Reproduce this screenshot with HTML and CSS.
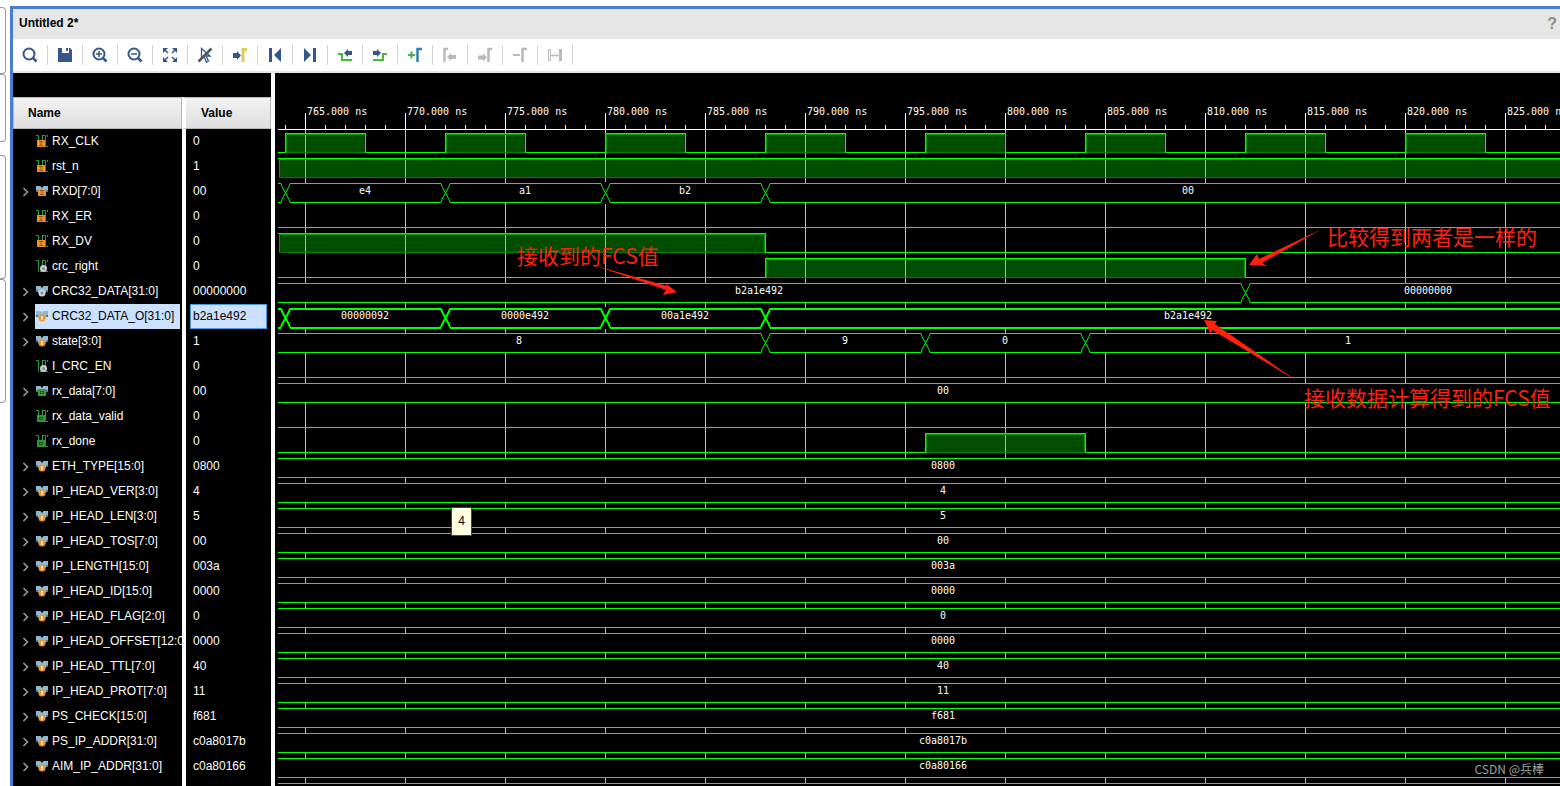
FILE: index.html
```html
<!DOCTYPE html>
<html lang="en">
<head>
<meta charset="utf-8">
<title>Untitled 2*</title>
<link rel="stylesheet" href="styles.css">
</head>
<body>
<svg class="defs" aria-hidden="true">
  <symbol id="wire" viewBox="0 0 12 12"><path d="M0 .5H2.500V11.500M6.500 0V11.500H4M6.500 .5H9.500V11.500H12M11.500 0V2" fill="none" stroke="#2f9a41"/></symbol>
  <symbol id="wire-in" viewBox="0 0 12 12"><use href="#wire"/><rect x="1" y="5" width="8" height="7" fill="#f0942a"/><path d="M3 6.500H7M5 6.500V10M3 10.500H7" stroke="#9c5510" fill="none"/></symbol>
  <symbol id="wire-net" viewBox="0 0 12 12"><use href="#wire"/><circle cx="7.500" cy="8.500" r="3.500" fill="#c9ccd0"/><circle cx="7.500" cy="8.500" r="1.500" fill="#888"/></symbol>
  <symbol id="wire-out" viewBox="0 0 12 12"><use href="#wire"/><rect x="1" y="5" width="8" height="7" fill="#36913c"/><rect x="3.500" y="7.500" width="3" height="2" fill="none" stroke="#1c5b22"/></symbol>
  <symbol id="busbase" viewBox="0 0 12 12"><path d="M0 1H4.500L6 3L7.500 1H12V7H10L8 10H4L2 7H0Z" fill="#90b9d1"/><path d="M0 5H2V7H0ZM10 5H12V7H10Z" fill="#557788"/></symbol>
  <symbol id="bus-in" viewBox="0 0 12 12"><use href="#busbase"/><rect x="2" y="4" width="8" height="7" fill="#f0942a"/><path d="M4 5.500H8M6 5.500V9.500M4 9.500H8" stroke="#9c5510" fill="none"/></symbol>
  <symbol id="bus-reg" viewBox="0 0 12 12"><use href="#busbase"/><circle cx="6" cy="8" r="3.500" fill="#f0942a"/><rect x="5" y="6" width="2" height="4" fill="#ffe2a8"/></symbol>
  <symbol id="bus-net" viewBox="0 0 12 12"><use href="#busbase"/><circle cx="6" cy="8" r="3.500" fill="#d0d3d7"/><circle cx="6" cy="8" r="1.500" fill="#858a90"/></symbol>
  <symbol id="bus-out" viewBox="0 0 12 12"><use href="#busbase"/><rect x="2" y="4" width="8" height="7" fill="#3c9c3c"/><rect x="4.500" y="6.500" width="3" height="2" fill="none" stroke="#1c5b22"/></symbol>
  <symbol id="chev" viewBox="0 0 6 10"><path d="M1 1L5 5L1 9" fill="none" stroke="#a0a0a0" stroke-width="1.500"/></symbol>
  <symbol id="lens" viewBox="0 0 18 18"><circle cx="8" cy="8" r="5.500" fill="none" stroke="#34568b" stroke-width="2"/><path d="M12 12L15.500 15.500" stroke="#34568b" stroke-width="2.500"/></symbol>
</svg>

<div class="app">
  <div class="side" aria-hidden="true">
    <div class="card short"></div><div class="card short gap"></div>
    <div class="card tall"></div><div class="card tall"></div>
  </div>
  <main class="window">
    <header class="titlebar"><h1>Untitled 2*</h1><button class="help" aria-label="Help">?</button></header>
    <div class="toolbar" role="toolbar" aria-label="Waveform tools">
      <button aria-label="Search"><svg viewBox="0 0 18 18"><use href="#lens"/></svg></button>
      <button aria-label="Save"><svg viewBox="0 0 18 18"><path d="M2 2H6V7H13V2H14L16 4V16H2Z M10 2H12V5H10Z" fill="#34568b"/></svg></button>
      <button aria-label="Zoom in"><svg viewBox="0 0 18 18"><use href="#lens"/><path d="M5 8H11M8 5V11" stroke="#34568b" stroke-width="1.500"/></svg></button>
      <button aria-label="Zoom out"><svg viewBox="0 0 18 18"><use href="#lens"/><path d="M5 8H11" stroke="#34568b" stroke-width="1.500"/></svg></button>
      <button aria-label="Zoom fit"><svg viewBox="0 0 18 18"><path d="M2 2H7L2 7ZM16 2H11L16 7ZM2 16H7L2 11ZM16 16H11L16 11Z" fill="#34568b"/><path d="M3 3L7 7M15 3L11 7M3 15L7 11M15 15L11 11" stroke="#34568b" stroke-width="1.500"/></svg></button>
      <button aria-label="Unsnap cursor"><svg viewBox="0 0 18 18"><path d="M5.500 2.500V13L8 10.500L10.500 16L12.500 15L10 10H14Z" fill="#fff" stroke="#34568b" stroke-width="1.300"/><path d="M2.500 15.500L15.500 2.500" stroke="#555" stroke-width="2.500"/></svg></button>
      <button aria-label="Go to cursor"><svg viewBox="0 0 18 18"><path d="M2 7H6V5L10 9.500L6 14V12H2Z" fill="#34568b"/><path d="M12 16V3.500H16" fill="none" stroke="#e0c75c" stroke-width="3"/></svg></button>
      <button aria-label="Go to start"><svg viewBox="0 0 18 18"><path d="M3 2H6V16H3ZM15 2V16L8 9Z" fill="#34568b"/></svg></button>
      <button aria-label="Go to end"><svg viewBox="0 0 18 18"><path d="M12 2H15V16H12ZM3 2V16L10 9Z" fill="#34568b"/></svg></button>
      <button aria-label="Previous transition"><svg viewBox="0 0 18 18"><path d="M2 8H6V14H16" fill="none" stroke="#46b83c" stroke-width="2"/><path d="M8 7L12 3V5H16V9H12V11Z" fill="#34568b"/></svg></button>
      <button aria-label="Next transition"><svg viewBox="0 0 18 18"><path d="M2 14H12V8H16" fill="none" stroke="#46b83c" stroke-width="2"/><path d="M10 7L6 3V5H2V9H6V11Z" fill="#34568b"/></svg></button>
      <button aria-label="Add marker"><svg viewBox="0 0 18 18"><path d="M2 9H9M5.500 5.500V12.500" stroke="#46b04c" stroke-width="2"/><path d="M11.500 16V3H16" fill="none" stroke="#2f7fb4" stroke-width="2.500"/></svg></button>
      <button aria-label="Previous marker" disabled><svg viewBox="0 0 18 18"><path d="M3.500 16V3H7" fill="none" stroke="#b9b9b9" stroke-width="2.500"/><path d="M6 11L10 7V9H15V13H10V15Z" fill="#b9b9b9"/></svg></button>
      <button aria-label="Next marker" disabled><svg viewBox="0 0 18 18"><path d="M12.500 16V3H16" fill="none" stroke="#b9b9b9" stroke-width="2.500"/><path d="M11 11.500L7 7.500V9.500H2V13.500H7V15.500Z" fill="#b9b9b9"/></svg></button>
      <button aria-label="Remove marker" disabled><svg viewBox="0 0 18 18"><path d="M2 9H9" stroke="#b9b9b9" stroke-width="2"/><path d="M11.500 16V3H16" fill="none" stroke="#b9b9b9" stroke-width="2.500"/></svg></button>
      <button aria-label="Measure" disabled><svg viewBox="0 0 18 18"><path d="M2.500 3.500H4.500V14.500H2.500Z" fill="none" stroke="#b9b9b9"/><path d="M13 3H16V15H13Z" fill="#b9b9b9"/><path d="M5 9.500H13M8 7.500L6 9.500L8 11.500M10 7.500L12 9.500L10 11.500" fill="none" stroke="#b9b9b9"/></svg></button>
    </div>
    <div class="content">
      <section class="signals">
        <table>
          <colgroup><col class="col-name"><col class="col-value"></colgroup>
          <thead><tr><th scope="col">Name</th><th scope="col">Value</th></tr></thead>
          <tbody>
            <tr><td><div class="sig"><i></i><svg><use href="#wire-in"/></svg><span>RX_CLK</span></div></td><td><span>0</span></td></tr>
            <tr><td><div class="sig"><i></i><svg><use href="#wire-in"/></svg><span>rst_n</span></div></td><td><span>1</span></td></tr>
            <tr><td><div class="sig"><button aria-label="Expand"><svg><use href="#chev"/></svg></button><svg><use href="#bus-in"/></svg><span>RXD[7:0]</span></div></td><td><span>00</span></td></tr>
            <tr><td><div class="sig"><i></i><svg><use href="#wire-in"/></svg><span>RX_ER</span></div></td><td><span>0</span></td></tr>
            <tr><td><div class="sig"><i></i><svg><use href="#wire-in"/></svg><span>RX_DV</span></div></td><td><span>0</span></td></tr>
            <tr><td><div class="sig"><i></i><svg><use href="#wire-net"/></svg><span>crc_right</span></div></td><td><span>0</span></td></tr>
            <tr><td><div class="sig"><button aria-label="Expand"><svg><use href="#chev"/></svg></button><svg><use href="#bus-net"/></svg><span>CRC32_DATA[31:0]</span></div></td><td><span>00000000</span></td></tr>
            <tr class="selected"><td><div class="sig"><button aria-label="Expand"><svg><use href="#chev"/></svg></button><svg><use href="#bus-reg"/></svg><span>CRC32_DATA_O[31:0]</span></div></td><td><span>b2a1e492</span></td></tr>
            <tr><td><div class="sig"><button aria-label="Expand"><svg><use href="#chev"/></svg></button><svg><use href="#bus-reg"/></svg><span>state[3:0]</span></div></td><td><span>1</span></td></tr>
            <tr><td><div class="sig"><i></i><svg><use href="#wire-net"/></svg><span>I_CRC_EN</span></div></td><td><span>0</span></td></tr>
            <tr><td><div class="sig"><button aria-label="Expand"><svg><use href="#chev"/></svg></button><svg><use href="#bus-out"/></svg><span>rx_data[7:0]</span></div></td><td><span>00</span></td></tr>
            <tr><td><div class="sig"><i></i><svg><use href="#wire-out"/></svg><span>rx_data_valid</span></div></td><td><span>0</span></td></tr>
            <tr><td><div class="sig"><i></i><svg><use href="#wire-out"/></svg><span>rx_done</span></div></td><td><span>0</span></td></tr>
            <tr><td><div class="sig"><button aria-label="Expand"><svg><use href="#chev"/></svg></button><svg><use href="#bus-reg"/></svg><span>ETH_TYPE[15:0]</span></div></td><td><span>0800</span></td></tr>
            <tr><td><div class="sig"><button aria-label="Expand"><svg><use href="#chev"/></svg></button><svg><use href="#bus-reg"/></svg><span>IP_HEAD_VER[3:0]</span></div></td><td><span>4</span></td></tr>
            <tr><td><div class="sig"><button aria-label="Expand"><svg><use href="#chev"/></svg></button><svg><use href="#bus-reg"/></svg><span>IP_HEAD_LEN[3:0]</span></div></td><td><span>5</span></td></tr>
            <tr><td><div class="sig"><button aria-label="Expand"><svg><use href="#chev"/></svg></button><svg><use href="#bus-reg"/></svg><span>IP_HEAD_TOS[7:0]</span></div></td><td><span>00</span></td></tr>
            <tr><td><div class="sig"><button aria-label="Expand"><svg><use href="#chev"/></svg></button><svg><use href="#bus-reg"/></svg><span>IP_LENGTH[15:0]</span></div></td><td><span>003a</span></td></tr>
            <tr><td><div class="sig"><button aria-label="Expand"><svg><use href="#chev"/></svg></button><svg><use href="#bus-reg"/></svg><span>IP_HEAD_ID[15:0]</span></div></td><td><span>0000</span></td></tr>
            <tr><td><div class="sig"><button aria-label="Expand"><svg><use href="#chev"/></svg></button><svg><use href="#bus-reg"/></svg><span>IP_HEAD_FLAG[2:0]</span></div></td><td><span>0</span></td></tr>
            <tr><td><div class="sig"><button aria-label="Expand"><svg><use href="#chev"/></svg></button><svg><use href="#bus-reg"/></svg><span>IP_HEAD_OFFSET[12:0]</span></div></td><td><span>0000</span></td></tr>
            <tr><td><div class="sig"><button aria-label="Expand"><svg><use href="#chev"/></svg></button><svg><use href="#bus-reg"/></svg><span>IP_HEAD_TTL[7:0]</span></div></td><td><span>40</span></td></tr>
            <tr><td><div class="sig"><button aria-label="Expand"><svg><use href="#chev"/></svg></button><svg><use href="#bus-reg"/></svg><span>IP_HEAD_PROT[7:0]</span></div></td><td><span>11</span></td></tr>
            <tr><td><div class="sig"><button aria-label="Expand"><svg><use href="#chev"/></svg></button><svg><use href="#bus-reg"/></svg><span>PS_CHECK[15:0]</span></div></td><td><span>f681</span></td></tr>
            <tr><td><div class="sig"><button aria-label="Expand"><svg><use href="#chev"/></svg></button><svg><use href="#bus-reg"/></svg><span>PS_IP_ADDR[31:0]</span></div></td><td><span>c0a8017b</span></td></tr>
            <tr><td><div class="sig"><button aria-label="Expand"><svg><use href="#chev"/></svg></button><svg><use href="#bus-reg"/></svg><span>AIM_IP_ADDR[31:0]</span></div></td><td><span>c0a80166</span></td></tr>
          </tbody>
        </table>
      </section>
      <section class="wave">
        <svg class="plot" role="img" aria-label="Signal waveforms">
          <defs>
            <pattern id="grid" x="30" y="0" width="100" height="1000" patternUnits="userSpaceOnUse"><rect width="1" height="1000" fill="#bdbdbd"/></pattern>
            <pattern id="major" x="30" y="0" width="100" height="1000" patternUnits="userSpaceOnUse"><rect width="1" height="1000" fill="#fff"/></pattern>
            <pattern id="minor" x="10" y="0" width="20" height="1000" patternUnits="userSpaceOnUse"><rect width="1" height="1000" fill="#fff"/></pattern>
            <pattern id="clock" x="10" y="60" width="160" height="20" patternUnits="userSpaceOnUse">
              <rect width="80" height="20" class="high"/><path d="M1.500 19V1.500H80" class="inner"/><path d="M1 19.500H80" class="base"/><path d="M.5 20V.5H80.500V19.500H160" class="line"/>
            </pattern>
            <g id="bus"><rect x="3" width="3000" height="20" fill="#000"/><path d="M3 .5H3000M3 19.500H3000" class="line"/></g>
            <path id="low" d="M3 19.500H3000" class="line"/>
            <g id="cross"><rect x="-4" y="-1" width="9" height="22" fill="#000"/><path d="M-4 .5L-3 3.500L.5 10L4 16.500L5 19.500M5 .5L4 3.500L.5 10L-3 16.500L-4 19.500" class="line smooth"/></g>
          </defs>
          <rect x="3" y="57" width="100%" height="100%" fill="url(#grid)"/>
          <rect x="3" y="40" width="100%" height="17" fill="url(#major)"/>
          <rect x="3" y="52" width="100%" height="5" fill="url(#minor)"/>
          <rect x="3" y="56" width="100%" height="1" fill="#fff"/>
          <g class="label">
            <text x="32" y="42">765.000 ns</text><text x="132" y="42">770.000 ns</text><text x="232" y="42">775.000 ns</text><text x="332" y="42">780.000 ns</text><text x="432" y="42">785.000 ns</text><text x="532" y="42">790.000 ns</text><text x="632" y="42">795.000 ns</text><text x="732" y="42">800.000 ns</text><text x="832" y="42">805.000 ns</text><text x="932" y="42">810.000 ns</text><text x="1032" y="42">815.000 ns</text><text x="1132" y="42">820.000 ns</text><text x="1232" y="42">825.000 ns</text>
          </g>
          <rect x="3" y="60" width="100%" height="20" fill="url(#clock)"/>
          <rect x="4" y="85" width="3000" height="20" class="high"/><path d="M4.500 105V86.500H3000" class="inner"/><path d="M4 104.500H3000" class="base"/><path d="M3 85.500H3000" class="line"/>
          <use href="#bus" y="110"/><use href="#cross" x="10" y="110"/><use href="#cross" x="170" y="110"/><use href="#cross" x="330" y="110"/><use href="#cross" x="490" y="110"/>
          <use href="#low" y="135"/>
          <rect x="4" y="160" width="486" height="20" class="high"/><path d="M4.500 180V161.500H489.500V180" class="inner"/><path d="M4 179.500H490" class="base"/><path d="M3 160.500H490.500V179.500H3000" class="line"/>
          <rect x="491" y="185" width="479" height="20" class="high"/><path d="M491.500 204V186.500H969.500V204" class="inner"/><path d="M3 204.500H490.500V185.500H970.500V204.500H3000" class="line"/><path d="M491 204.500H970" class="base"/>
          <use href="#bus" y="210"/><use href="#cross" x="970" y="210"/>
          <g class="active"><use href="#bus" y="235"/><use href="#cross" x="10" y="235"/><use href="#cross" x="170" y="235"/><use href="#cross" x="330" y="235"/><use href="#cross" x="490" y="235"/></g>
          <use href="#bus" y="260"/><use href="#cross" x="490" y="260"/><use href="#cross" x="650" y="260"/><use href="#cross" x="810" y="260"/>
          <use href="#low" y="285"/><use href="#bus" y="310"/><use href="#low" y="335"/>
          <rect x="651" y="360" width="159" height="20" class="high"/><path d="M651.500 379V361.500H809.500V379" class="inner"/><path d="M3 379.500H650.500V360.500H810.500V379.500H3000" class="line"/><path d="M651 379.500H810" class="base"/>
          <use href="#bus" y="385"/><use href="#bus" y="410"/><use href="#bus" y="435"/><use href="#bus" y="460"/><use href="#bus" y="485"/><use href="#bus" y="510"/><use href="#bus" y="535"/><use href="#bus" y="560"/><use href="#bus" y="585"/><use href="#bus" y="610"/><use href="#bus" y="635"/><use href="#bus" y="660"/><use href="#bus" y="685"/><use href="#bus" y="710"/>
          <g class="label mid">
            <text x="90" y="121">e4</text><text x="250" y="121">a1</text><text x="410" y="121">b2</text><text x="913" y="121">00</text>
            <text x="484" y="221">b2a1e492</text><text x="1153" y="221">00000000</text>
            <text x="90" y="246">00000092</text><text x="250" y="246">0000e492</text><text x="410" y="246">00a1e492</text><text x="913" y="246">b2a1e492</text>
            <text x="244" y="271">8</text><text x="570" y="271">9</text><text x="730" y="271">0</text><text x="1073" y="271">1</text>
            <text x="668" y="321">00</text><text x="668" y="396">0800</text><text x="668" y="421">4</text><text x="668" y="446">5</text><text x="668" y="471">00</text><text x="668" y="496">003a</text><text x="668" y="521">0000</text><text x="668" y="546">0</text><text x="668" y="571">0000</text><text x="668" y="596">40</text><text x="668" y="621">11</text><text x="668" y="646">f681</text><text x="668" y="671">c0a8017b</text><text x="668" y="696">c0a80166</text>
          </g>
          <g class="note">
            <path d="M318 192L392 213L390 210L402 219L388 222L391 217Z"/>
            <path d="M1047 156L987 190L992 193L974 192L982 181L984 186Z"/>
            <path d="M1022 308L937 257L936 262L929 247L942 248L940 251Z"/>
            <text x="242" y="191">接收到的FCS值</text>
            <text x="1052" y="172">比较得到两者是一样的</text>
            <text x="1029" y="333">接收数据计算得到的FCS值</text>
          </g>
        </svg>
        <div class="tip" role="tooltip">4</div>
        <div class="credit">CSDN @兵棒</div>
      </section>
    </div>
  </main>
</div>
</body>
</html>
```
FILE: styles.css
```css
* { box-sizing: border-box; }
body { margin: 0; background: #fff; color: #000; font: 12px/16px "Liberation Sans", "Noto Sans CJK SC", sans-serif; overflow: hidden; }
button { margin: 0; padding: 0; border: 0; background: none; font: inherit; }
.defs { position: absolute; width: 0; height: 0; }
.app { display: flex; height: 100vh; }
.side { flex: none; width: 10px; padding-top: 7px; }
.card { width: 6px; border: 1px solid #999; border-left: 0; border-radius: 0 4px 4px 0; }
.short { height: 67px; }
.gap { height: 68px; margin-bottom: 13px; }
.tall { height: 124px; }
.window { flex: 1; min-width: 0; display: flex; flex-direction: column; margin-top: 6px; border: solid #4a7dcf; border-width: 3px 0 0 3px; }
.titlebar { flex: none; display: flex; align-items: center; justify-content: space-between; height: 30px; padding: 0 3px 0 6px; background: #e6e6e6; }
.titlebar h1 { margin: 0; padding-bottom: 2px; font-size: 12px; }
.help { color: #8c8c8c; font-size: 16px; font-weight: bold; }
.toolbar { flex: none; display: flex; align-items: center; height: 34px; border-bottom: 2px solid #e6e6e6; }
.toolbar button { display: flex; align-items: center; justify-content: center; width: 35px; height: 20px; border-right: 1px solid #d4d4d4; }
.toolbar svg { width: 18px; height: 18px; }
.content { flex: 1; min-height: 0; display: flex; }
.signals { flex: none; width: 258px; padding-top: 24px; overflow: hidden; background: linear-gradient(90deg, #000 0 169px, #fff 169px 173px, #000 173px) 0 24px no-repeat #000; }
table { width: 100%; table-layout: fixed; border-collapse: separate; border-spacing: 0; color: #fff; }
.col-name { width: 169px; }
th { height: 32px; padding: 0 14px; text-align: left; color: #000; background: linear-gradient(#f2f2f2, #dedee0); background-clip: padding-box; border: 1px solid #b8b8b8; }
th:last-child, td:last-child { border-left: 4px solid #fff; }
th:last-child { padding-left: 15px; }
td { height: 25px; padding: 0; overflow: hidden; white-space: nowrap; }
td:last-child { padding: 0 4px; }
td > span { display: block; padding: 0 2px; line-height: 23px; border: 1px solid transparent; }
.sig { display: flex; align-items: center; height: 25px; line-height: 25px; }
.sig i, .sig button { flex: none; width: 22px; height: 25px; padding-left: 6px; }
.sig > svg { flex: none; width: 12px; height: 12px; margin: 0 4px 1px 1px; }
.sig button svg { display: block; width: 13px; height: 10px; }
.selected .sig { margin-right: 2px; background: linear-gradient(90deg, transparent 22px, #cce0ff 22px); color: #000; }
.selected td > span { background: #cce0ff; color: #000; border-color: #4b9be0; }
.wave { position: relative; flex: 1; min-width: 0; overflow: hidden; background: #000; margin-left: 4px; }
.plot { display: block; width: 100%; height: 100%; }
.high { fill: #00ff00; fill-opacity: .3; }
.line { fill: none; stroke: #00ff00; shape-rendering: crispEdges; }
.smooth { shape-rendering: auto; }
.inner { fill: none; stroke: #00a000; }
.base { fill: none; stroke: #008000; }
.active { stroke-width: 2px; }
.label { fill: #fff; font: 10px "DejaVu Sans Mono", monospace; }
.mid { text-anchor: middle; }
.note { fill: #ff2010; font: 21px "Noto Sans CJK SC", sans-serif; }
.tip { position: absolute; left: 176px; top: 434px; width: 21px; padding: 5px 0; text-align: center; line-height: 17px; color: #000; background: #ffffe1; border: 1px solid #444; }
.credit { position: absolute; right: 16px; bottom: 9px; color: #a0a0a0; font: 12px/16px "Noto Sans CJK SC", sans-serif; }
```
